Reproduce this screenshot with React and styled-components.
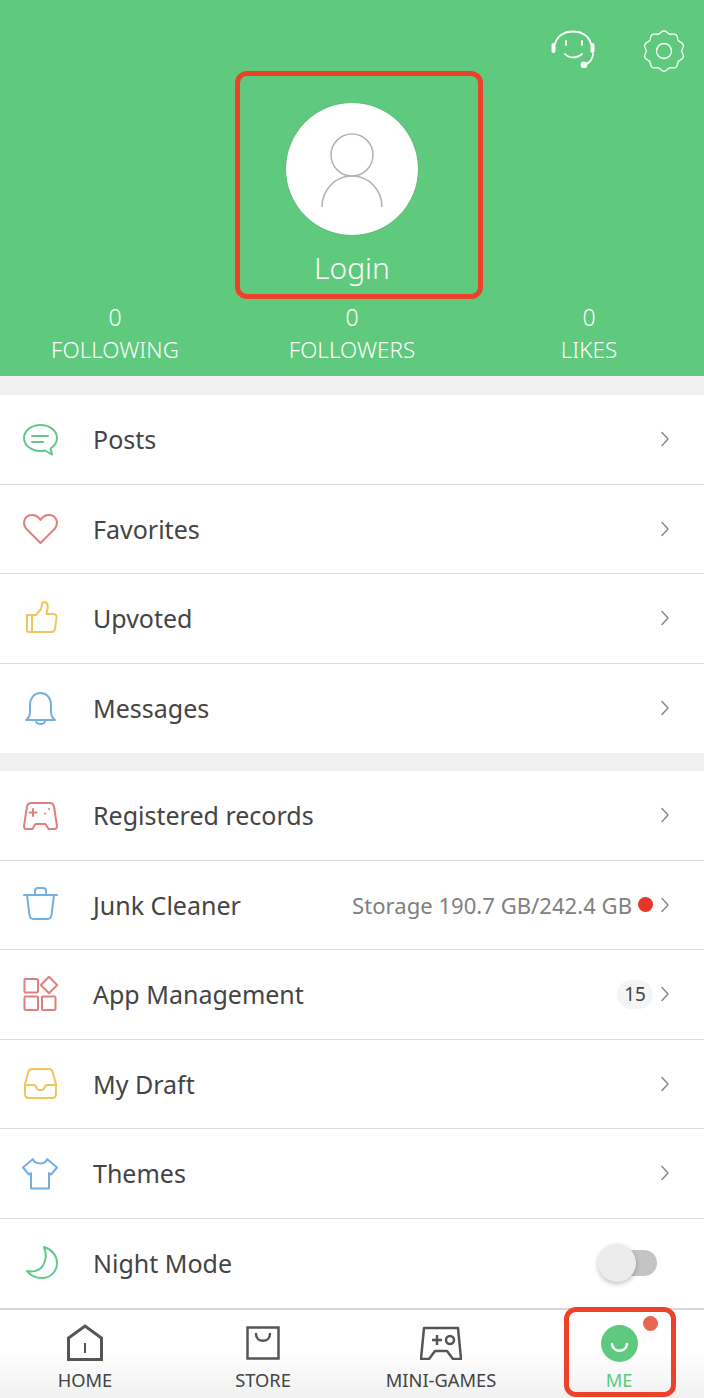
import React from "react";
import styled, { createGlobalStyle } from "styled-components";

const GlobalStyle = createGlobalStyle`
  html, body { margin: 0; padding: 0; background: #fff; }
  body { font-family: "Noto Sans", "Open Sans", sans-serif; }
`;

const Page = styled.div`
  position: relative;
  width: 704px;
  height: 1398px;
  overflow: hidden;
  background: #f0f0f0;
  display: flex;
  flex-direction: column;
`;

const Header = styled.header`
  height: 376px;
  background: #5fc97e;
  display: flex;
  flex-direction: column;
  align-items: center;
  color: #fff;
`;

const TopIcons = styled.div`
  align-self: stretch;
  height: 103px;
  padding: 30px 19px 0 0;
  box-sizing: border-box;
  display: flex;
  justify-content: flex-end;
  align-items: flex-start;
  gap: 46px;
`;

const Avatar = styled.div`
  width: 132px;
  height: 132px;
  padding-top: 3px;
  box-sizing: border-box;
  border-radius: 50%;
  background: #fff;
  box-shadow: 0 0 1px rgba(0, 0, 0, 0.3);
  display: flex;
  align-items: center;
  justify-content: center;
`;

const LoginLabel = styled.div`
  margin-top: 14px;
  font-size: 30px;
  line-height: 38px;
  font-weight: 300;
`;

const Stats = styled.div`
  margin-top: 15px;
  display: flex;
  justify-content: center;
  width: 100%;
`;

const Stat = styled.div`
  width: 237px;
  flex: none;
  text-align: center;
  font-weight: 300;
`;

const StatValue = styled.div`
  font-size: 23px;
  line-height: 30px;
`;

const StatLabel = styled.div`
  font-size: 22.4px;
  line-height: 36px;
`;

const Group = styled.section`
  margin-top: ${(p) => p.$gap || 18}px;
  background: #fff;
`;

const Row = styled.div`
  height: 89.5px;
  box-sizing: border-box;
  display: flex;
  align-items: center;
  padding: 0 34px 0 22px;
  border-bottom: ${(p) => (p.$last ? "none" : "1px solid #dcdcdc")};
`;

const IconSlot = styled.div`
  width: 37px;
  height: 37px;
  flex: none;
  display: flex;
  align-items: center;
  justify-content: center;
`;

const RowLabel = styled.div`
  margin-left: 34px;
  flex: 1;
  font-size: 25px;
  color: #444;
`;

const RowInfo = styled.div`
  font-size: 22.1px;
  color: #808080;
`;

const RedDot = styled.span`
  width: 15px;
  height: 15px;
  margin: 0 7px 0 6px;
  border-radius: 50%;
  background: #e8352a;
`;

const CountPill = styled.span`
  width: 36px;
  height: 29px;
  margin-right: 7px;
  border-radius: 15px;
  background: #f4f4f4;
  color: #444;
  font-size: 19px;
  display: flex;
  align-items: center;
  justify-content: center;
`;

const Toggle = styled.div`
  position: relative;
  width: 52px;
  height: 26px;
  margin-right: 13px;
  border-radius: 13px;
  background: #c4c4c4;
`;

const ToggleKnob = styled.div`
  position: absolute;
  left: -7px;
  top: -6px;
  width: 38px;
  height: 38px;
  border-radius: 50%;
  background: #ececec;
  box-shadow: 0 2px 5px rgba(0, 0, 0, 0.25);
`;

const TabBar = styled.nav`
  margin-top: auto;
  height: 88px;
  flex: none;
  border-top: 2px solid #d8d8d8;
  background: linear-gradient(#fff 45%, #f1f1f1);
  display: flex;
  justify-content: center;
`;

const Tab = styled.div`
  position: relative;
  width: 178px;
  flex: none;
  display: flex;
  flex-direction: column;
  align-items: center;
  padding-top: 14px;
  box-sizing: border-box;
  color: ${(p) => (p.$active ? "#5fc97e" : "#444")};
`;

const TabIcon = styled.div`
  height: 38px;
  display: flex;
  align-items: center;
`;

const TabLabel = styled.div`
  margin-top: 6px;
  font-size: 18.3px;
  line-height: 24px;
`;

const Badge = styled.span`
  position: absolute;
  top: 6px;
  left: 113px;
  width: 15px;
  height: 15px;
  border-radius: 50%;
  background: #e8664f;
`;

const Highlight = styled.div`
  position: absolute;
  left: ${(p) => p.$x}px;
  top: ${(p) => p.$y}px;
  width: ${(p) => p.$w}px;
  height: ${(p) => p.$h}px;
  box-sizing: border-box;
  border: 5px solid #ee4129;
  border-radius: 12px;
  pointer-events: none;
`;

const Line = ({ color, size = 37, children, width = 2 }) => (
  <svg width={size} height={size} viewBox="0 0 37 37" fill="none" stroke={color} strokeWidth={width} strokeLinecap="round" strokeLinejoin="round">
    {children}
  </svg>
);

const Chevron = () => (
  <svg width="10" height="16" viewBox="0 0 10 16" fill="none" stroke="#8a8a8a" strokeWidth="1.5" strokeLinecap="round" strokeLinejoin="round">
    <path d="M2 1.500 8 8 2 14.500" />
  </svg>
);

const GREEN = "#5ec98a";
const RED = "#e07f7f";
const YELLOW = "#f0c65c";
const BLUE = "#74aee2";

const PostsIcon = () => (
  <Line color={GREEN}>
    <path d="M18.500 4C9.500 4 2 9.500 2 17s7.500 13 16.500 13c2 0 3 0 4.500-.500L30 33.500l-1.500-6C32.500 25 35 21.500 35 17 35 9.500 27.500 4 18.500 4Z" />
    <path d="M10 15h16M10 21h11" />
  </Line>
);

const HeartIcon = () => (
  <Line color={RED}>
    <path d="M18.500 33 4 18.500C-.500 12 3.500 5 10 5c4 0 6.500 2 8.500 5 2-3 4.500-5 8.500-5 6.500 0 10.500 7 6 13.500L18.500 33Z" />
  </Line>
);

const ThumbIcon = () => (
  <Line color={YELLOW}>
    <path d="M5 15h5v17H7a2 2 0 0 1-2-2V15Z" />
    <path d="M10 15h4l5-6 1-5c.500-2 3-2.500 4.500-1 1.500 1.500 1.500 3.500 1 6l-1 5h7c2 0 3.500 1.500 3 3.500L33 29c-.500 2-1.500 3-3.500 3H10" />
  </Line>
);

const BellIcon = () => (
  <Line color={BLUE}>
    <path d="M4 30c3-2 4-5 4-9v-6c0-7 4.500-12 10.500-12S29 8 29 15v6c0 4 1 7 4 9H4Z" />
    <path d="M14 31c.500 4 8.500 4 9 0" />
  </Line>
);

const PadIcon = () => (
  <Line color={RED}>
    <path d="M9 6h19c2 0 3.500 1 4 3.500L35 29c0 2-1 3-2.500 3h-6l-3-5H13.500l-3 5h-6C3 32 2 31 2 29L5 9.500C5.500 7 7 6 9 6Z" />
    <path d="M7.500 15.500h7M11 12v7M23 16.500h.1M27 12h.1" />
  </Line>
);

const TrashIcon = () => (
  <Line color={BLUE}>
    <path d="M2 9h33M5 9l2.500 20c.300 2.500 1.500 4 4 4h14c2.500 0 3.700-1.500 4-4L32 9" />
    <path d="M13 9V5c0-2 1-3 3-3h5c2 0 3 1 3 3v4" />
  </Line>
);

const AppsIcon = () => (
  <Line color={RED}>
    <rect x="2.500" y="3" width="13.500" height="13.500" rx="1" />
    <rect x="2.500" y="20.500" width="13.500" height="13.500" rx="1" />
    <rect x="20" y="20.500" width="13.500" height="13.500" rx="1" />
    <path d="m27 .800 8.200 8.200-8.200 8.200-8.200-8.200L27 .800Z" />
  </Line>
);

const DraftIcon = () => (
  <Line color={YELLOW}>
    <path d="M10 4h17c2 0 3 1 3.500 2.500L34 19v10c0 3-1.500 4-4 4H7c-2.500 0-4-1-4-4V19L6.500 6.500C7 5 8 4 10 4Z" />
    <path d="M3 20h9c1 0 1.500.500 2 1.500l1 2c.500 1 1 1.500 2 1.500h3c1 0 1.500-.500 2-1.500l1-2c.500-1 1-1.500 2-1.500h9" />
  </Line>
);

const ShirtIcon = () => (
  <Line color={BLUE}>
    <path d="M11 4 1 12.500l6 7 2-1.500v15.500h18V18l2 1.500 6-7L25 4c-1 3-3.500 4.500-6.500 4.500S12 7 11 4Z" />
  </Line>
);

const MoonIcon = () => (
  <Line color={GREEN}>
    <path d="M22 2c7 2 13 8 13 16 0 9-7 15-15 15-6 0-12-3-15-7 5 1 11 .500 15-4 4-5 5-13 2-20Z" />
  </Line>
);

const HeadsetIcon = () => (
  <svg width="46" height="38" viewBox="0 0 46 38" fill="none" stroke="#fff" strokeWidth="1.800" strokeLinecap="round">
    <path d="M4 14C6 6 13 1.500 22 1.500S38 6 40 14" />
    <path d="M15 11v4M31 11v4M14 24c4 4.500 12 4.500 17 0" />
    <path d="M42 24c0 4-3 9-8 10.500" />
    <path d="M2.500 15v6M41.500 15v6" strokeWidth="4" />
    <circle cx="33" cy="35" r="2.500" fill="#fff" />
  </svg>
);

// wavy outline with ten bumps
const gearPath = (() => {
  const pts = [];
  for (let i = 0; i < 120; i++) {
    const a = (i / 120) * Math.PI * 2 - Math.PI / 2;
    const r = 19 + 1.2 * Math.cos(10 * (a + Math.PI / 2));
    pts.push(`${(21 + r * Math.cos(a)).toFixed(2)} ${(21 + r * Math.sin(a)).toFixed(2)}`);
  }
  return `M${pts.join("L")}Z`;
})();

const GearIcon = () => (
  <svg width="42" height="42" viewBox="0 0 42 42" fill="none" stroke="#fff" strokeWidth="1.300">
    <path d={gearPath} />
    <circle cx="21" cy="21" r="7.500" />
  </svg>
);

const PersonIcon = () => (
  <svg width="62" height="76" viewBox="0 0 62 76" fill="none" stroke="#b4b4b4" strokeWidth="1.500">
    <circle cx="31" cy="22" r="21" />
    <path d="M1 74c0-17 13-31 30-31s30 14 30 31" />
  </svg>
);

const HomeIcon = () => (
  <svg width="38" height="38" viewBox="0 0 38 38" fill="none" stroke="#555" strokeWidth="3">
    <path d="M2.500 35.500V14L19 2l16.500 12v21.500Z" />
    <path d="M19 19v10" strokeWidth="2" />
  </svg>
);

const BagIcon = () => (
  <svg width="34" height="34" viewBox="0 0 34 34" fill="none" stroke="#555" strokeWidth="2.500">
    <path d="M1.500 1.500h31v31h-31Z" />
    <path d="M10 8c0 9 14 9 14 0" strokeLinecap="round" />
  </svg>
);

const PadTabIcon = () => (
  <svg width="42" height="34" viewBox="0 0 42 34" fill="none" stroke="#555" strokeWidth="2.500" strokeLinejoin="round">
    <path d="M4 2h34l3 31h-8l-6-8H15l-6 8H1L4 2Z" />
    <path d="M12 14h10M17 9v10" />
    <circle cx="30" cy="14" r="4" />
  </svg>
);

const FaceIcon = () => (
  <svg width="37" height="37" viewBox="0 0 37 37">
    <circle cx="18.500" cy="18.500" r="18.500" fill="#5fc97e" />
    <path d="M11 19c1 9 14 9 15 0" fill="none" stroke="#fff" strokeWidth="2.500" strokeLinecap="round" />
  </svg>
);

const firstGroup = [
  { label: "Posts", Icon: PostsIcon },
  { label: "Favorites", Icon: HeartIcon },
  { label: "Upvoted", Icon: ThumbIcon },
  { label: "Messages", Icon: BellIcon },
];

const stats = [
  { value: 0, label: "FOLLOWING" },
  { value: 0, label: "FOLLOWERS" },
  { value: 0, label: "LIKES" },
];

const App = () => (
  <Page>
    <GlobalStyle />
    <Header>
      <TopIcons>
        <HeadsetIcon />
        <GearIcon />
      </TopIcons>
      <Avatar>
        <PersonIcon />
      </Avatar>
      <LoginLabel>Login</LoginLabel>
      <Stats>
        {stats.map((s) => (
          <Stat key={s.label}>
            <StatValue>{s.value}</StatValue>
            <StatLabel>{s.label}</StatLabel>
          </Stat>
        ))}
      </Stats>
    </Header>

    <Group $gap={19}>
      {firstGroup.map(({ label, Icon }, i) => (
        <Row key={label} $last={i === firstGroup.length - 1}>
          <IconSlot><Icon /></IconSlot>
          <RowLabel>{label}</RowLabel>
          <Chevron />
        </Row>
      ))}
    </Group>

    <Group>
      <Row>
        <IconSlot><PadIcon /></IconSlot>
        <RowLabel>Registered records</RowLabel>
        <Chevron />
      </Row>
      <Row>
        <IconSlot><TrashIcon /></IconSlot>
        <RowLabel>Junk Cleaner</RowLabel>
        <RowInfo>Storage 190.7 GB/242.4 GB</RowInfo>
        <RedDot />
        <Chevron />
      </Row>
      <Row>
        <IconSlot><AppsIcon /></IconSlot>
        <RowLabel>App Management</RowLabel>
        <CountPill>15</CountPill>
        <Chevron />
      </Row>
      <Row>
        <IconSlot><DraftIcon /></IconSlot>
        <RowLabel>My Draft</RowLabel>
        <Chevron />
      </Row>
      <Row>
        <IconSlot><ShirtIcon /></IconSlot>
        <RowLabel>Themes</RowLabel>
        <Chevron />
      </Row>
      <Row $last>
        <IconSlot><MoonIcon /></IconSlot>
        <RowLabel>Night Mode</RowLabel>
        <Toggle><ToggleKnob /></Toggle>
      </Row>
    </Group>

    <TabBar>
      <Tab>
        <TabIcon><HomeIcon /></TabIcon>
        <TabLabel>HOME</TabLabel>
      </Tab>
      <Tab>
        <TabIcon><BagIcon /></TabIcon>
        <TabLabel>STORE</TabLabel>
      </Tab>
      <Tab>
        <TabIcon><PadTabIcon /></TabIcon>
        <TabLabel>MINI-GAMES</TabLabel>
      </Tab>
      <Tab $active>
        <TabIcon><FaceIcon /></TabIcon>
        <TabLabel>ME</TabLabel>
        <Badge />
      </Tab>
    </TabBar>

    <Highlight $x={235} $y={71} $w={248} $h={228} />
    <Highlight $x={564} $y={1307} $w={112} $h={90} />
  </Page>
);

export default App;
